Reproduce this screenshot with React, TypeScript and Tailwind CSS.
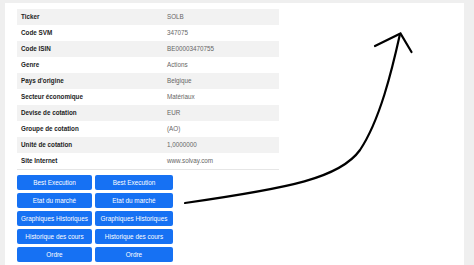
import React from "react";

const rows: [string, string][] = [
  ["Ticker", "SOLB"],
  ["Code SVM", "347075"],
  ["Code ISIN", "BE00003470755"],
  ["Genre", "Actions"],
  ["Pays d'origine", "Belgique"],
  ["Secteur économique", "Matériaux"],
  ["Devise de cotation", "EUR"],
  ["Groupe de cotation", "(AO)"],
  ["Unité de cotation", "1,0000000"],
  ["Site Internet", "www.solvay.com"],
];

const buttons = [
  "Best Execution",
  "Etat du marché",
  "Graphiques Historiques",
  "Historique des cours",
  "Ordre",
];

export default function App() {
  return (
    <div
      className="relative w-[474px] h-[265px] bg-[#efefef] overflow-hidden"
      style={{ fontFamily: '"Liberation Sans", Arial, sans-serif' }}
    >
      <div className="ml-[5px] pt-[3px] w-[459px] h-[265px]">
        <div className="bg-white h-full pl-[12px] pt-[6px]">
          <div className="w-[262px] border-b border-[#e6e6e6]">
            {rows.map(([k, v], i) => (
              <div
                key={k}
                className={`flex items-center h-[16px] ${i % 2 === 0 ? "bg-[#f2f2f2]" : "bg-white"}`}
              >
                <div className="w-[146px] pl-[4px] text-[6.3px] font-bold text-[#222]">{k}</div>
                <div className="pl-[4px] text-[6.3px] text-[#666]">{v}</div>
              </div>
            ))}
          </div>
          <div className="mt-[5px] flex flex-col gap-[3px]">
            {buttons.map((b) => (
              <div key={b} className="flex gap-[3px]">
                <div className="w-[75px] h-[15px] rounded-[2px] bg-[#1671f3] text-white text-[6.4px] flex items-center justify-center">
                  {b}
                </div>
                <div className="w-[78px] h-[15px] rounded-[2px] bg-[#1671f3] text-white text-[6.4px] flex items-center justify-center">
                  {b}
                </div>
              </div>
            ))}
          </div>
        </div>
      </div>
      <svg
        className="absolute left-0 top-0"
        width="474"
        height="265"
        viewBox="0 0 474 265"
        fill="none"
      >
        <path
          d="M185 203 C 290 188, 340 178, 360 150 C 380 120, 392 70, 400 34"
          stroke="#000"
          strokeWidth="2.2"
          strokeLinecap="round"
        />
        <path d="M375 46 L400.5 33.5 L411.5 52" stroke="#000" strokeWidth="2.2" strokeLinecap="round" strokeLinejoin="miter" />
      </svg>
    </div>
  );
}
